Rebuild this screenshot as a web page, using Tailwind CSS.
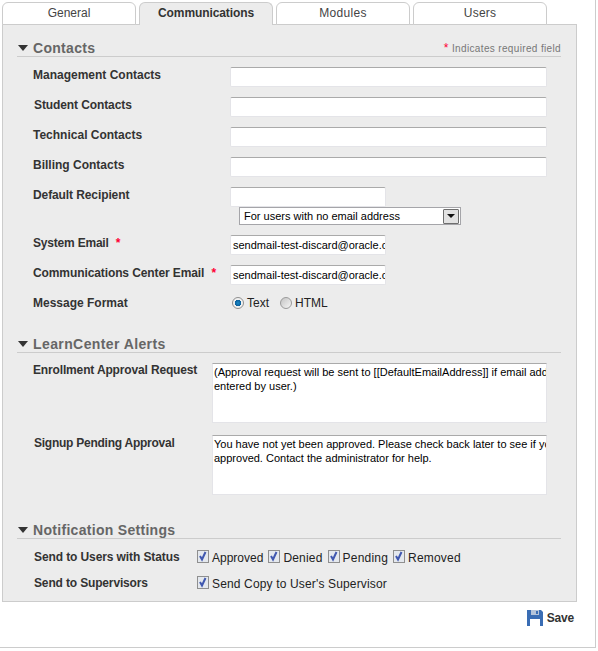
<!DOCTYPE html>
<html lang="en">

<head>
  <meta charset="UTF-8">
  <meta name="viewport" content="width=device-width, initial-scale=1.0">
  <title>Communications</title>
  <script src="https://cdn.jsdelivr.net/npm/@tailwindcss/browser@4"></script>
</head>

<body class="bg-white">
  <div class="w-[596px] h-[648px] border-r border-b border-[#cccccc] pl-[2px] pt-[2px] font-['Liberation_Sans',Arial,sans-serif] text-[12px] text-[#222222] overflow-hidden">

    <!-- tabs -->
    <div class="flex h-[22px] gap-[3px]">
      <div class="w-[134px] h-[23px] bg-white border border-[#cccccc] rounded-t-[6px] text-center leading-[20px] text-[#444444]">General</div>
      <div class="relative z-10 w-[134px] h-[23px] bg-[#ececec] border border-b-0 border-[#cccccc] rounded-t-[6px] text-center leading-[20px] font-bold text-[#333333] tracking-[-0.1px]">Communications</div>
      <div class="w-[134px] h-[23px] bg-white border border-[#cccccc] rounded-t-[6px] text-center leading-[20px] text-[#444444] tracking-[0.3px]">Modules</div>
      <div class="w-[134px] h-[23px] bg-white border border-[#cccccc] rounded-t-[6px] text-center leading-[20px] text-[#444444] tracking-[0.2px]">Users</div>
    </div>

    <!-- panel -->
    <div class="w-[575px] h-[578px] bg-[#ececec] border border-[#cccccc] pl-[14px] pr-[15px]">

      <div class="flex items-end justify-between h-[32px] border-b border-[#cccccc]">
        <div class="flex items-center gap-[4px] h-[18px] mb-[-1px]">
          <svg width="12" height="6" viewBox="0 0 12 6"><path d="M1 0h10L6 6z" fill="#333333"/></svg>
          <h2 class="text-[14px] font-bold text-[#666666] tracking-[0.3px]">Contacts</h2>
        </div>
        <div class="text-[10px] text-[#777777] leading-[15px] tracking-[0.35px]"><span class="text-[#ff0033] text-[12px]">*</span> Indicates required field</div>
      </div>

      <div class="pl-[16px] pt-[10px]">
        <div class="flex h-[30px]">
          <label class="w-[197px] font-bold leading-[16px] text-[#333333]">Management Contacts</label>
          <input type="text" class="w-[317px] h-[20px] bg-white border border-[#e4e4e8] border-t-[#aaaaaa] rounded-[2px]">
        </div>
        <div class="flex h-[30px]">
          <label class="w-[197px] pl-[1px] font-bold leading-[16px] text-[#333333] tracking-[-0.1px]">Student Contacts</label>
          <input type="text" class="w-[317px] h-[20px] bg-white border border-[#e4e4e8] border-t-[#aaaaaa] rounded-[2px]">
        </div>
        <div class="flex h-[30px]">
          <label class="w-[197px] font-bold leading-[16px] text-[#333333]">Technical Contacts</label>
          <input type="text" class="w-[317px] h-[20px] bg-white border border-[#e4e4e8] border-t-[#aaaaaa] rounded-[2px]">
        </div>
        <div class="flex h-[30px]">
          <label class="w-[197px] font-bold leading-[16px] text-[#333333]">Billing Contacts</label>
          <input type="text" class="w-[317px] h-[20px] bg-white border border-[#e4e4e8] border-t-[#aaaaaa] rounded-[2px]">
        </div>
        <div class="flex h-[48px]">
          <label class="w-[197px] font-bold leading-[16px] text-[#333333] tracking-[-0.1px]">Default Recipient</label>
          <div>
            <input type="text" class="block w-[156px] h-[20px] bg-white border border-[#e4e4e8] border-t-[#aaaaaa] rounded-[2px]">
            <div class="ml-[9px] w-[222px] h-[18px] bg-white border border-[#a5a5a9] flex items-center justify-between pl-[4px] pr-[1px]">
              <span class="text-[11px] text-black">For users with no email address</span>
              <span class="w-[16px] h-[15px] bg-[#e2e2e2] border border-[#6e6e6e] rounded-[1px] flex items-center justify-center">
                <svg width="8" height="4" viewBox="0 0 8 4"><path d="M0 0h8L4 4z" fill="#111111"/></svg>
              </span>
            </div>
          </div>
        </div>
        <div class="flex h-[30px]">
          <label class="w-[197px] font-bold leading-[16px] text-[#333333] tracking-[-0.2px]">System Email <span class="text-[#ff0033] ml-[4px]">*</span></label>
          <input type="text" value="sendmail-test-discard@oracle.com" class="w-[156px] h-[20px] bg-white border border-[#e4e4e8] border-t-[#aaaaaa] rounded-[2px] pl-[2px] text-[11px] text-black">
        </div>
        <div class="flex h-[30px]">
          <label class="w-[197px] font-bold leading-[16px] text-[#333333] tracking-[-0.1px]">Communications Center Email <span class="text-[#ff0033] ml-[4px]">*</span></label>
          <input type="text" value="sendmail-test-discard@oracle.com" class="w-[156px] h-[20px] bg-white border border-[#e4e4e8] border-t-[#aaaaaa] rounded-[2px] pl-[2px] text-[11px] text-black">
        </div>
        <div class="flex h-[20px]">
          <label class="w-[197px] font-bold leading-[16px] text-[#333333]">Message Format</label>
          <div class="flex items-center h-[16px] pl-[2px] text-[#222222]">
            <span class="w-[12px] h-[12px] rounded-full border border-[#8f8f8f] bg-[radial-gradient(circle,#1a8ac8_0,#0a5f9c_3px,#f0f0f0_3.5px)]"></span>
            <span class="ml-[3px]">Text</span>
            <span class="ml-[11px] w-[12px] h-[12px] rounded-full border border-[#9a9a9a] bg-gradient-to-br from-[#c4c4c4] to-[#f6f6f6]"></span>
            <span class="ml-[3px]">HTML</span>
          </div>
        </div>
      </div>

      <div class="flex items-end h-[38px] border-b border-[#cccccc]">
        <div class="flex items-center gap-[4px] h-[18px] mb-[-1px]">
          <svg width="12" height="6" viewBox="0 0 12 6"><path d="M1 0h10L6 6z" fill="#333333"/></svg>
          <h2 class="text-[14px] font-bold text-[#666666] tracking-[0.4px]">LearnCenter Alerts</h2>
        </div>
      </div>

      <div class="pl-[16px] pt-[10px]">
        <div class="flex h-[72px]">
          <label class="w-[179px] font-bold leading-[14px] text-[#333333] tracking-[-0.15px]">Enrollment Approval Request</label>
          <div class="w-[335px] h-[60px] bg-white border border-[#e4e4e8] border-t-[#aaaaaa] overflow-hidden">
            <textarea readonly class="block w-[420px] h-[58px] px-[1px] leading-[14px] pt-[1px] text-[11px] text-black resize-none overflow-hidden whitespace-pre">(Approval request will be sent to [[DefaultEmailAddress]] if email address is not
entered by user.)</textarea>
          </div>
        </div>
        <div class="flex h-[60px]">
          <label class="w-[179px] pl-[1px] font-bold leading-[16px] text-[#333333] tracking-[-0.25px]">Signup Pending Approval</label>
          <div class="w-[335px] h-[60px] bg-white border border-[#e4e4e8] border-t-[#aaaaaa] overflow-hidden">
            <textarea readonly class="block w-[420px] h-[58px] px-[1px] leading-[14px] pt-[1px] text-[11px] text-black resize-none overflow-hidden whitespace-pre">You have not yet been approved. Please check back later to see if you have been
approved. Contact the administrator for help.</textarea>
          </div>
        </div>
      </div>

      <div class="flex items-end h-[44px] border-b border-[#cccccc]">
        <div class="flex items-center gap-[4px] h-[18px] mb-[-1px]">
          <svg width="12" height="6" viewBox="0 0 12 6"><path d="M1 0h10L6 6z" fill="#333333"/></svg>
          <h2 class="text-[14px] font-bold text-[#666666] tracking-[0.3px]">Notification Settings</h2>
        </div>
      </div>

      <div class="pl-[17px] pt-[10px]">
        <div class="flex h-[26px]">
          <label class="w-[163px] font-bold leading-[16px] text-[#333333] tracking-[-0.1px]">Send to Users with Status</label>
          <div class="flex items-start h-[16px]">
            <svg class="mt-[1px]" width="12" height="13" viewBox="0 0 12 13"><rect x=".5" y=".5" width="11" height="12" fill="#e4e8ee" stroke="#8f8f8f"/><path d="M3 6l2 3.5 3.5-7.5" fill="none" stroke="#4058b0" stroke-width="2"/></svg>
            <span class="ml-[3px] mr-[5px] mt-[1px] leading-[16px]">Approved</span>
            <svg class="mt-[1px]" width="12" height="13" viewBox="0 0 12 13"><rect x=".5" y=".5" width="11" height="12" fill="#e4e8ee" stroke="#8f8f8f"/><path d="M3 6l2 3.5 3.5-7.5" fill="none" stroke="#4058b0" stroke-width="2"/></svg>
            <span class="ml-[3px] mr-[5px] mt-[1px] leading-[16px] tracking-[0.2px]">Denied</span>
            <svg class="mt-[1px]" width="12" height="13" viewBox="0 0 12 13"><rect x=".5" y=".5" width="11" height="12" fill="#e4e8ee" stroke="#8f8f8f"/><path d="M3 6l2 3.5 3.5-7.5" fill="none" stroke="#4058b0" stroke-width="2"/></svg>
            <span class="ml-[3px] mr-[5px] mt-[1px] leading-[16px] tracking-[0.2px]">Pending</span>
            <svg class="mt-[1px]" width="12" height="13" viewBox="0 0 12 13"><rect x=".5" y=".5" width="11" height="12" fill="#e4e8ee" stroke="#8f8f8f"/><path d="M3 6l2 3.5 3.5-7.5" fill="none" stroke="#4058b0" stroke-width="2"/></svg>
            <span class="ml-[3px] mt-[1px] leading-[16px] tracking-[0.2px]">Removed</span>
          </div>
        </div>
        <div class="flex h-[20px]">
          <label class="w-[163px] font-bold leading-[16px] text-[#333333] tracking-[-0.15px]">Send to Supervisors</label>
          <div class="flex items-start h-[16px]">
            <svg class="mt-[1px]" width="12" height="13" viewBox="0 0 12 13"><rect x=".5" y=".5" width="11" height="12" fill="#e4e8ee" stroke="#8f8f8f"/><path d="M3 6l2 3.5 3.5-7.5" fill="none" stroke="#4058b0" stroke-width="2"/></svg>
            <span class="ml-[3px] mt-[1px] leading-[16px] tracking-[0.15px]">Send Copy to User's Supervisor</span>
          </div>
        </div>
      </div>
    </div>

    <!-- save -->
    <div class="w-[572px] flex justify-end items-center gap-[4px] pt-[7px]">
      <svg width="16" height="16" viewBox="0 0 16 16">
        <path d="M0 0h14l2 2v14H0z" fill="#3a6db4"/>
        <path d="M4 0h8v5H4z" fill="#b4c4da"/>
        <path d="M9 1h2v3H9z" fill="#3a6db4"/>
        <path d="M3 9h10v7H3z" fill="#ffffff"/>
      </svg>
      <span class="font-bold text-[#333333] tracking-[-0.2px]">Save</span>
    </div>
  </div>
</body>

</html>
